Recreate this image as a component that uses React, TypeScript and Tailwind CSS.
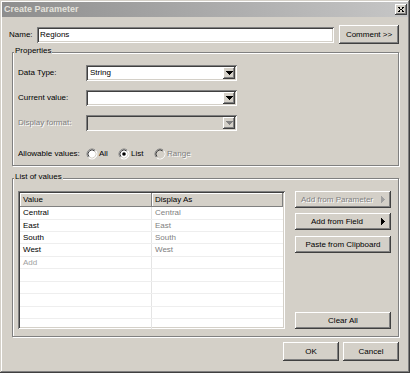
import React from 'react'

const raised =
  'shadow-[inset_-1px_-1px_#404040,inset_1px_1px_#ffffff,inset_-2px_-2px_#808080,inset_2px_2px_#d4d0c8]'
const sunken =
  'shadow-[inset_1px_1px_#808080,inset_-1px_-1px_#ffffff,inset_2px_2px_#404040,inset_-2px_-2px_#d4d0c8]'
const disabledText = 'text-[#808080] [text-shadow:1px_1px_0_#ffffff]'

function DownArrow({ disabled }: { disabled?: boolean }) {
  return (
    <svg width="7" height="4" viewBox="0 0 7 4">
      <path d="M0 0h7v1H0zM1 1h5v1H1zM2 2h3v1H2zM3 3h1v1H3z" fill={disabled ? '#808080' : '#000000'} />
    </svg>
  )
}

function RightArrow({ disabled }: { disabled?: boolean }) {
  return (
    <svg width="4" height="7" viewBox="0 0 4 7">
      <path d="M0 0h1v7H0zM1 1h1v5H1zM2 2h1v3H2zM3 3h1v1H3z" fill={disabled ? '#a0a0a0' : '#000000'} />
    </svg>
  )
}

function Combo({ value, disabled }: { value?: string; disabled?: boolean }) {
  return (
    <div className={`w-[151px] h-[16px] flex p-[2px] ${sunken} ${disabled ? 'bg-[#d4d0c8]' : 'bg-white'}`}>
      <div className="flex-1 pl-[2px] leading-[12px]">{value}</div>
      <div className={`w-[12px] h-full bg-[#d4d0c8] flex items-center justify-center ${raised}`}>
        <DownArrow disabled={disabled} />
      </div>
    </div>
  )
}

function Radio({ checked, disabled }: { checked?: boolean; disabled?: boolean }) {
  return (
    <svg width="12" height="12" viewBox="0 0 12 12" className="shrink-0">
      <circle cx="6" cy="6" r="5" fill={disabled ? '#d4d0c8' : '#ffffff'} />
      <path d="M2.46 9.54 A5 5 0 0 1 9.54 2.46" stroke="#808080" fill="none" />
      <path d="M9.54 2.46 A5 5 0 0 1 2.46 9.54" stroke="#ffffff" fill="none" />
      <path d="M3.17 8.83 A4 4 0 0 1 8.83 3.17" stroke="#404040" fill="none" />
      <path d="M8.83 3.17 A4 4 0 0 1 3.17 8.83" stroke="#d4d0c8" fill="none" />
      {checked && <circle cx="6" cy="6" r="1.8" fill="#000000" />}
    </svg>
  )
}

function Button({
  children,
  className = '',
  disabled,
  arrow,
}: {
  children: React.ReactNode
  className?: string
  disabled?: boolean
  arrow?: boolean
}) {
  return (
    <div className={`bg-[#d4d0c8] flex items-center px-[2px] ${raised} ${className}`}>
      <span className={`flex-1 text-center leading-none ${disabled ? disabledText : ''}`}>{children}</span>
      {arrow && (
        <span className="w-[12px] flex items-center pl-[4px]">
          <RightArrow disabled={disabled} />
        </span>
      )}
    </div>
  )
}

function Group({ title, className = '', children }: { title: string; className?: string; children: React.ReactNode }) {
  return (
    <div
      className={`relative border border-[#808080] shadow-[1px_1px_0_#ffffff,inset_1px_1px_0_#ffffff] ${className}`}
    >
      <span className="absolute -top-[6px] left-[1px] px-[1px] bg-[#d4d0c8] leading-none">{title}</span>
      {children}
    </div>
  )
}

const rows = [
  { value: 'Central', display: 'Central', h: 'h-[13px]' },
  { value: 'East', display: 'East', h: 'h-[12px]' },
  { value: 'South', display: 'South', h: 'h-[12px]' },
  { value: 'West', display: 'West', h: 'h-[13px]' },
  { value: 'Add', display: '', h: 'h-[12px]', muted: true },
  { value: '', display: '', h: 'h-[13px]' },
  { value: '', display: '', h: 'h-[12px]' },
  { value: '', display: '', h: 'h-[13px]' },
  { value: '', display: '', h: 'h-[12px]' },
  { value: '', display: '', h: 'h-[12px]' },
]

export default function App() {
  return (
    <div className="w-[410px] h-[373px] bg-[#d4d0c8] p-[2px] flex flex-col font-['Liberation_Sans',Arial,sans-serif] text-[8px] text-black shadow-[inset_-1px_-1px_#404040,inset_1px_1px_#d4d0c8,inset_-2px_-2px_#808080,inset_2px_2px_#ffffff]">
      {/* title bar */}
      <div className="h-[15px] shrink-0 flex items-center justify-between pl-[2px] pr-[1px] bg-gradient-to-r from-[#8e8e8e] to-[#c6c6c6]">
        <span className="font-bold text-[9px] text-[#e4e2dc] leading-none">Create Parameter</span>
        <div className={`w-[12px] h-[11px] bg-[#d4d0c8] flex items-center justify-center ${raised}`}>
          <svg width="6" height="5" viewBox="0 0 6 5">
            <path d="M0 0h2v1H0zM4 0h2v1H4zM1 1h1v1H1zM4 1h1v1H4zM2 2h2v1H2zM1 3h1v1H1zM4 3h1v1H4zM0 4h2v1H0zM4 4h2v1H4z" fill="#000" />
          </svg>
        </div>
      </div>

      <div className="flex flex-col pl-[7px]">
        {/* name row */}
        <div className="mt-[8px] h-[19px] flex items-center">
          <span className="w-[28px] shrink-0 leading-none">Name:</span>
          <div className={`w-[297px] h-[16px] bg-white pl-[3px] flex items-center ${sunken}`}>Regions</div>
          <Button className="ml-[5px] w-[60px] h-[19px]">Comment &gt;&gt;</Button>
        </div>

        {/* properties */}
        <Group title="Properties" className="mt-[8px] ml-[3px] w-[387px] pt-[12px] pl-[5px] pb-[5px]">
          <div className="flex flex-col gap-[9px]">
            <div className="flex items-center">
              <span className="w-[68px]">Data Type:</span>
              <Combo value="String" />
            </div>
            <div className="flex items-center">
              <span className="w-[68px]">Current value:</span>
              <Combo />
            </div>
            <div className="flex items-center">
              <span className={`w-[68px] ${disabledText}`}>Display format:</span>
              <Combo disabled />
            </div>
          </div>
          <div className="mt-[17px] h-[12px] flex items-center">
            <span className="w-[68px]">Allowable values:</span>
            <Radio />
            <span className="ml-[1px] w-[19px]">All</span>
            <Radio checked />
            <span className="ml-[1px] w-[23px]">List</span>
            <Radio disabled />
            <span className={`ml-[1px] ${disabledText}`}>Range</span>
          </div>
        </Group>

        {/* list of values */}
        <Group title="List of values" className="mt-[12px] ml-[3px] w-[387px] pt-[12px] pl-[5px] pb-[7px]">
          <div className="flex gap-[10px]">
            <div className={`w-[267px] h-[138px] bg-white p-[2px] flex flex-col overflow-hidden ${sunken}`}>
              <div className="h-[14px] shrink-0 flex bg-[#d4d0c8]">
                <div className="w-[132px] pl-[3px] flex items-center shadow-[inset_-1px_-1px_#808080,inset_1px_1px_#ffffff]">
                  Value
                </div>
                <div className="flex-1 pl-[3px] flex items-center shadow-[inset_-1px_-1px_#808080,inset_1px_1px_#ffffff]">
                  Display As
                </div>
              </div>
              {rows.map((r, i) => (
                <div key={i} className={`${r.h} shrink-0 flex border-b border-[#eeeeee]`}>
                  <div
                    className={`w-[132px] pl-[3px] flex items-center border-r border-[#e4e4e4] ${
                      r.muted ? 'text-[#a0a0a0]' : ''
                    }`}
                  >
                    {r.value}
                  </div>
                  <div className="flex-1 pl-[3px] flex items-center text-[#808080]">{r.display}</div>
                </div>
              ))}
            </div>
            <div className="w-[96px] h-[138px] flex flex-col">
              <Button className="h-[17px]" disabled arrow>
                Add from Parameter
              </Button>
              <Button className="h-[17px] mt-[5px]" arrow>
                Add from Field
              </Button>
              <Button className="h-[17px] mt-[6px]">Paste from Clipboard</Button>
              <Button className="h-[17px] mt-auto">Clear All</Button>
            </div>
          </div>
        </Group>

        {/* footer */}
        <div className="mt-[5px] ml-[3px] w-[387px] flex justify-end gap-[4px]">
          <Button className="w-[56px] h-[19px]">OK</Button>
          <Button className="w-[56px] h-[19px]">Cancel</Button>
        </div>
      </div>
    </div>
  )
}
